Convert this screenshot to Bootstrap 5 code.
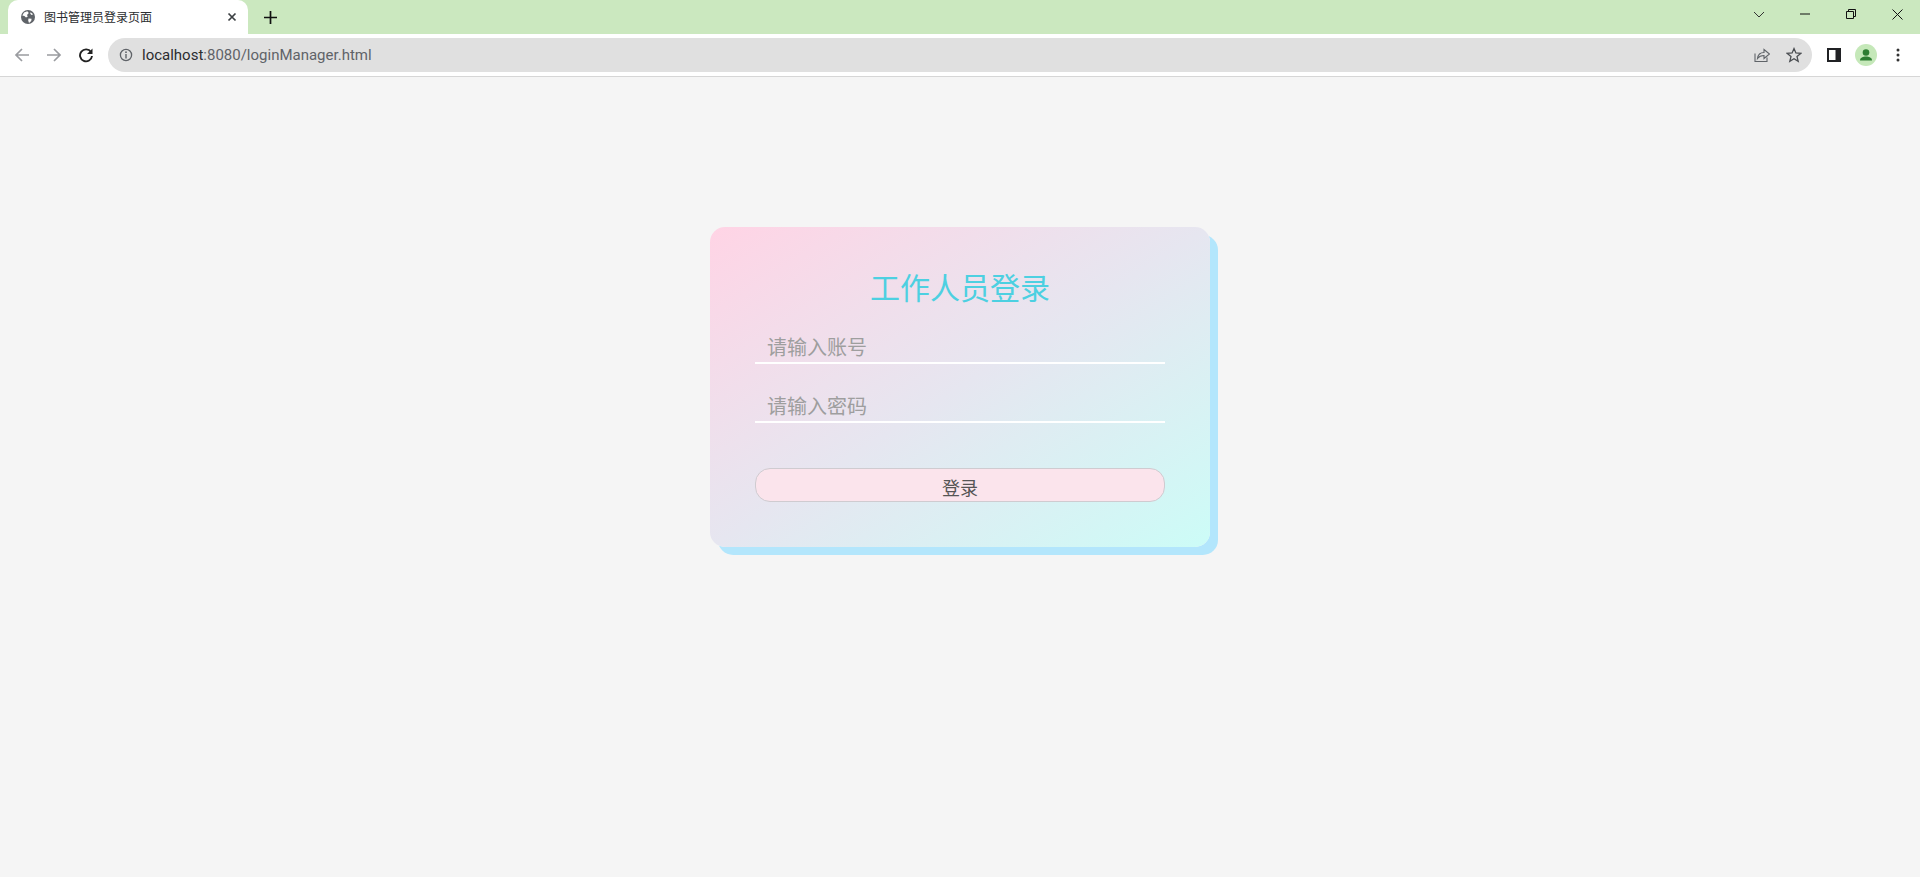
<!DOCTYPE html>
<html lang="zh-CN">
<head>
<meta charset="utf-8">
<title>图书管理员登录页面</title>
<link href="https://cdn.jsdelivr.net/npm/bootstrap@5.3.0/dist/css/bootstrap.min.css" rel="stylesheet">
<style>
html,body{height:100%;overflow:hidden}
body{background:#f5f5f5;font-family:"Noto Sans CJK SC",sans-serif}
.tabstrip{height:34px;background:#cbe8bf;padding-left:8px}
.tabitem{width:240px;height:34px;background:#fff;border-radius:10px 10px 0 0;padding:0 11px 0 13px;color:#2b2d30}
.tabitem span{font-size:12px;line-height:34px;margin-left:9px;letter-spacing:0}
.newtab{margin-left:12px;width:20px;height:34px}
.winctl{width:46px;height:28px}
.toolbar{height:43px;background:#fff;padding:4px 0;border-bottom:1px solid #d6d6d6}
.navbtn{width:32px;height:34px}
.navfirst{margin-left:6px}
.omnibox{width:1704px;height:34px;background:#e0e0e0;border-radius:17px;margin-left:6px;padding:0 6px 0 11px}
.url{font-family:"Roboto",sans-serif;font-size:15px;color:#5f6368;margin-left:9px}
.url b{font-weight:400;color:#2b2c2f}
.sidegap{margin-left:6px}
.stagewrap{padding-top:150px}
.logincard{width:500px;height:320px;border-radius:15px;background:linear-gradient(to bottom right,#ffd4e5,#e6e6f0 50%,#ccfcf7);box-shadow:8px 8px 0 #b3e6fc;padding:0 45px}
.logintitle{font-size:30px;font-weight:400;line-height:40px;color:#4dd0e1;margin:39px 0 0;text-align:center}
.fieldinput{display:block;width:100%;height:34px;margin-top:0;background:transparent;border:0;border-bottom:2px solid #fff;outline:0;font-size:20px;padding:0 12px;color:#333;font-family:inherit}
.fieldinput::placeholder{color:#9e9e9e;opacity:1}
.fieldone{margin-top:24px}
.fieldtwo{margin-top:25px}
.loginbtn{display:block;width:100%;height:34px;margin-top:45px;border-radius:15px;background:#fbe4ec;border:1.5px solid #cfcbd0;color:#555;font-size:18px;line-height:1;padding:3px 0 0;font-family:inherit}
</style>
</head>
<body>
<header>
  <div class="tabstrip d-flex align-items-center">
    <div class="tabitem d-flex align-items-center">
      <svg width="14" height="14" viewBox="0 0 14 14"><circle cx="7" cy="7" r="7" fill="#5f6368"/><path d="M3 2.5 6.3 1.2 7.8 3 6 5 6.8 6.5 5 7.5 3.4 6 1.3 5.4ZM7.5 8.5 10.6 8.8 10.2 11 8 12.9 7.2 10.6ZM9.5 2.2 12.2 4.2 10.5 5 9.3 3.8Z" fill="#fff"/></svg>
      <span>图书管理员登录页面</span>
      <svg class="ms-auto" width="10" height="10" viewBox="0 0 10 10"><path d="M1.5 1.5 8.5 8.5M8.5 1.5 1.5 8.5" stroke="#3c4043" stroke-width="1.7"/></svg>
    </div>
    <div class="newtab d-flex align-items-center justify-content-center">
      <svg width="13" height="13" viewBox="0 0 13 13"><path d="M6.5 0V13M0 6.5H13" stroke="#111" stroke-width="1.7"/></svg>
    </div>
    <div class="ms-auto d-flex align-items-start align-self-start">
      <div class="winctl d-flex align-items-center justify-content-center"><svg width="12" height="7" viewBox="0 0 12 7"><path d="M1 1 6 6 11 1" fill="none" stroke="#333" stroke-width="1"/></svg></div>
      <div class="winctl d-flex align-items-center justify-content-center"><svg width="10" height="2" viewBox="0 0 10 2"><path d="M0 1H10" stroke="#111" stroke-width="1"/></svg></div>
      <div class="winctl d-flex align-items-center justify-content-center"><svg width="10" height="10" viewBox="0 0 10 10"><path d="M.5 2.5H7.5V9.5H.5ZM2.5 2.5V.5H9.5V7.5H7.5" fill="none" stroke="#111" stroke-width="1"/></svg></div>
      <div class="winctl d-flex align-items-center justify-content-center"><svg width="11" height="11" viewBox="0 0 11 11"><path d="M.5.5 10.5 10.5M10.5.5 .5 10.5" stroke="#111" stroke-width="1"/></svg></div>
    </div>
  </div>
  <div class="toolbar d-flex align-items-center">
    <div class="navbtn navfirst d-flex align-items-center justify-content-center"><svg width="16" height="16" viewBox="0 0 16 16"><path d="M15 8H2M8 2 2 8 8 14" fill="none" stroke="#9a9ca0" stroke-width="1.7"/></svg></div>
    <div class="navbtn d-flex align-items-center justify-content-center"><svg width="16" height="16" viewBox="0 0 16 16"><path d="M1 8H14M8 2 14 8 8 14" fill="none" stroke="#9a9ca0" stroke-width="1.7"/></svg></div>
    <div class="navbtn d-flex align-items-center justify-content-center"><svg width="16" height="16" viewBox="0 0 16 16"><path d="M13 5A6 6 0 1 0 14 9" fill="none" stroke="#222" stroke-width="1.9"/><path d="M14.5 1.5V7H9Z" fill="#222"/></svg></div>
    <div class="omnibox d-flex align-items-center">
      <svg width="14" height="14" viewBox="0 0 14 14"><circle cx="7" cy="7" r="5.6" fill="none" stroke="#5f6368" stroke-width="1.3"/><path d="M7 6V10.4" stroke="#5f6368" stroke-width="1.4"/><circle cx="7" cy="4.2" r=".9" fill="#5f6368"/></svg>
      <span class="url"><b>localhost</b>:8080/loginManager.html</span>
      <svg class="ms-auto" width="16" height="16" viewBox="0 0 16 16"><path d="M1 6.5V14.5H13V10.5M3.5 11.5C4 7.5 7 5.5 10 5.5V2.5L15.5 7 10 11.5V8.5C7.5 8.5 5 9.5 3.5 11.5Z" fill="none" stroke="#5f6368" stroke-width="1.1"/></svg>
      <svg class="ms-3 me-1" width="16" height="16" viewBox="0 0 16 16"><path d="M8 1.6 9.9 6 14.7 6.4 11 9.6 12.2 14.3 8 11.8 3.8 14.3 5 9.6 1.3 6.4 6.1 6Z" fill="none" stroke="#4a4d51" stroke-width="1.3"/></svg>
    </div>
    <div class="navbtn sidegap d-flex align-items-center justify-content-center"><svg width="14" height="14" viewBox="0 0 14 14"><path d="M0 0H14V14H0Z" fill="#202124"/><path d="M2 2H8.5V12H2Z" fill="#fff"/></svg></div>
    <div class="navbtn d-flex align-items-center justify-content-center"><svg width="22" height="22" viewBox="0 0 22 22"><circle cx="11" cy="11" r="11" fill="#c5e8b9"/><circle cx="11" cy="8.5" r="3.3" fill="#2e7d32"/><path d="M5 16.5C5 13.5 8 12.5 11 12.5S17 13.5 17 16.5Z" fill="#2e7d32"/></svg></div>
    <div class="navbtn d-flex align-items-center justify-content-center"><svg width="4" height="14" viewBox="0 0 4 14"><circle cx="2" cy="2" r="1.5" fill="#333"/><circle cx="2" cy="7" r="1.5" fill="#333"/><circle cx="2" cy="12" r="1.5" fill="#333"/></svg></div>
  </div>
</header>
<main class="stagewrap d-flex justify-content-center">
  <form class="logincard" onsubmit="return false">
    <h1 class="logintitle">工作人员登录</h1>
    <input class="fieldinput fieldone" type="text" placeholder="请输入账号">
    <input class="fieldinput fieldtwo" type="password" placeholder="请输入密码">
    <button class="loginbtn" type="button">登录</button>
  </form>
</main>
<script src="https://cdn.jsdelivr.net/npm/bootstrap@5.3.0/dist/js/bootstrap.bundle.min.js"></script>
</body>
</html>
